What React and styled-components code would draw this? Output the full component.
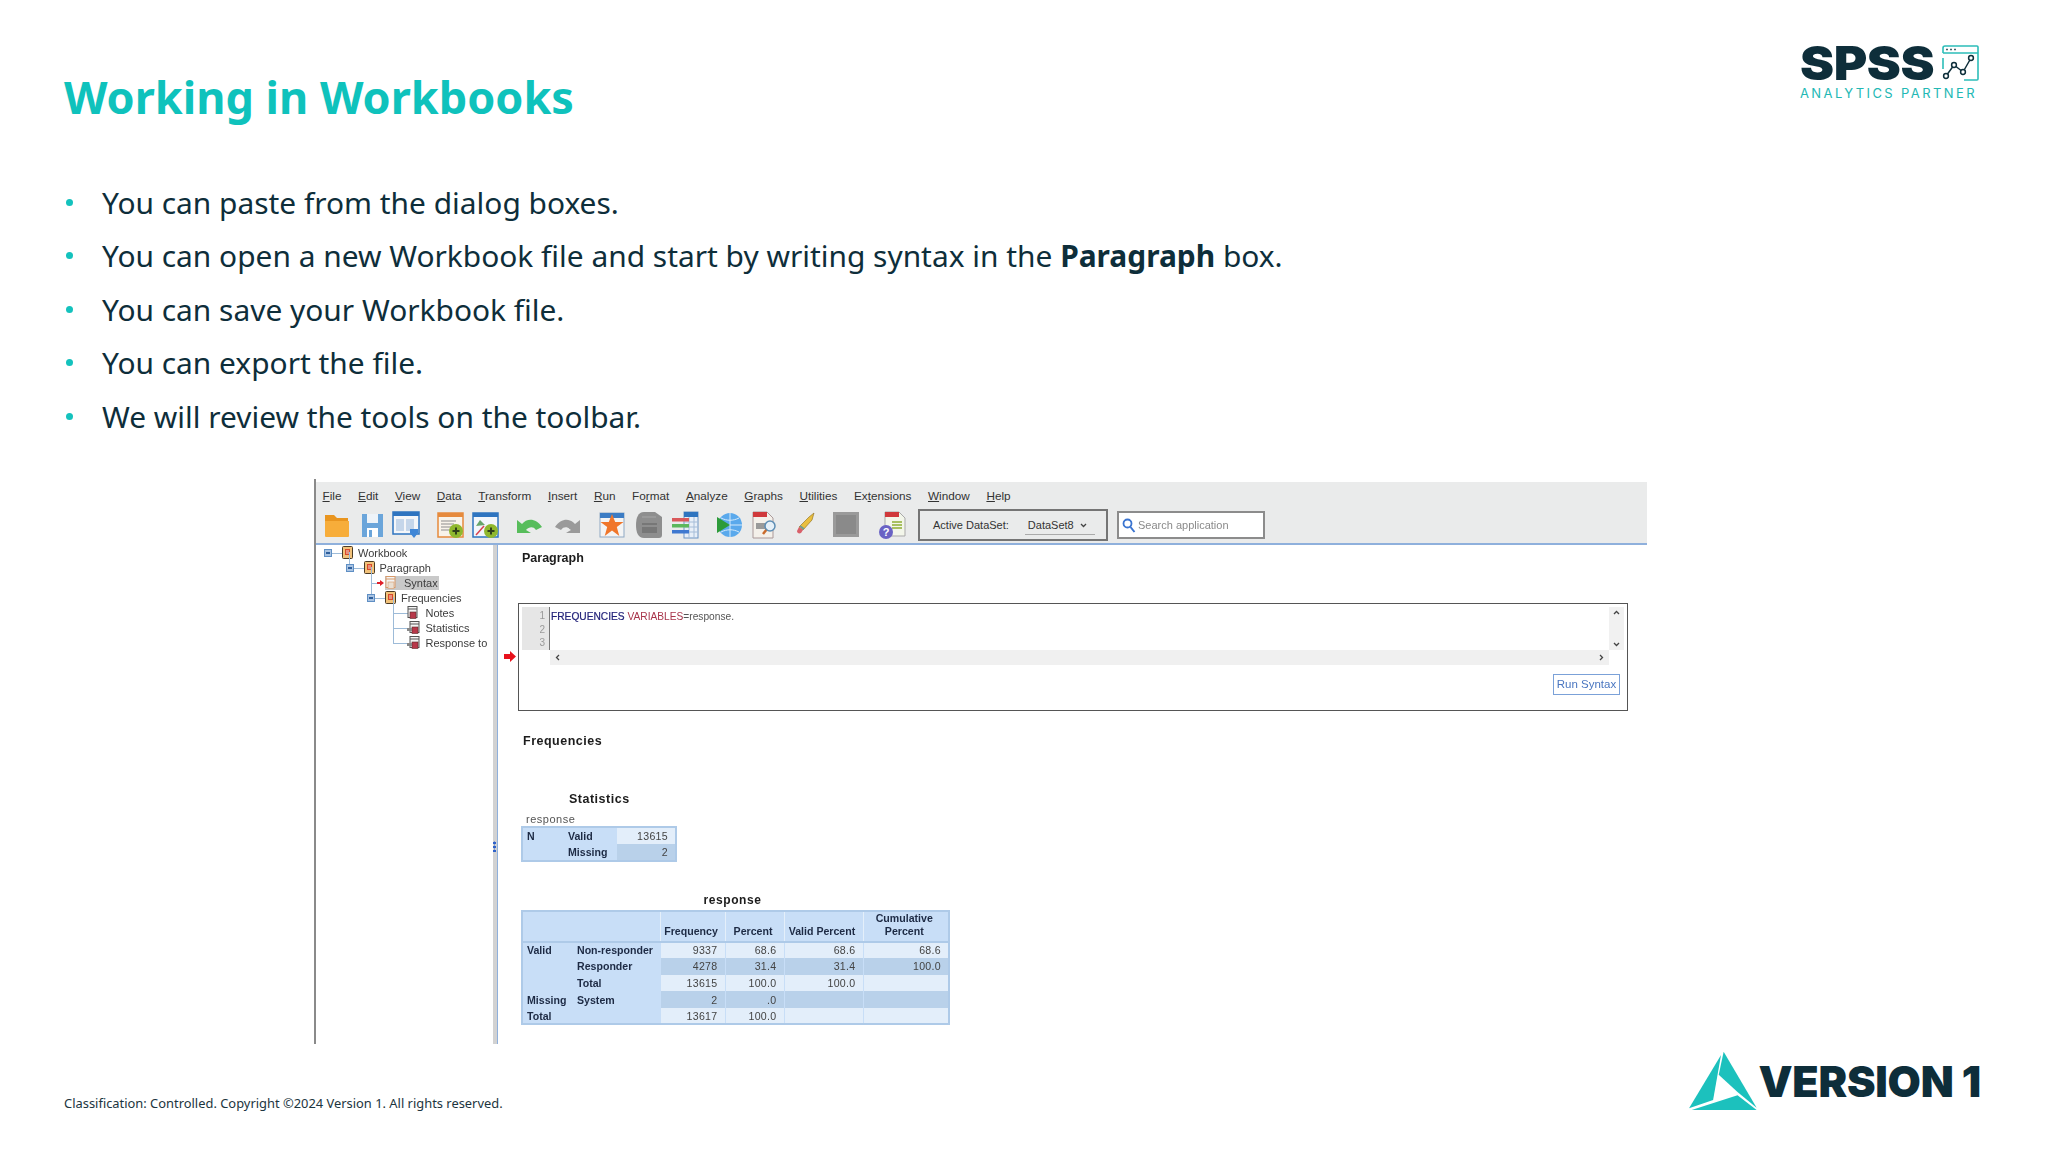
import React from 'react'
import styled, { createGlobalStyle } from 'styled-components'

const GlobalStyles = createGlobalStyle`
  html, body {
    margin: 0;
    padding: 0;
    background: #fff;
  }
  * { box-sizing: border-box; }
`

const Slide = styled.main`
  width: 2048px;
  height: 1152px;
  padding: 0 66px 0 64px;
  display: flex;
  flex-direction: column;
  overflow: hidden;
  font-family: "Noto Sans", sans-serif;
  color: #0e2e3a;
`

const Header = styled.header`
  height: 175.5px;
  display: flex;
  justify-content: space-between;
  align-items: flex-start;
`

const Title = styled.h1`
  margin: 67px 0 0;
  font-size: 45px;
  line-height: 60px;
  font-weight: 700;
  color: #0fc2bc;
`

const Brand = styled.div`
  margin: 45px 3px 0 0;
  width: 179px;
`

const BrandTop = styled.div`
  display: flex;
  justify-content: space-between;
  align-items: flex-start;
`

const BrandName = styled.span`
  font-family: Inter, sans-serif;
  font-weight: 900;
  font-size: 47px;
  line-height: 36px;
  letter-spacing: -0.4px;
  color: #0e2e3a;
  transform: scaleX(1.09);
  transform-origin: left center;
`

const BrandSub = styled.div`
  margin-top: 5px;
  font-family: Inter, sans-serif;
  font-size: 13px;
  line-height: 13px;
  letter-spacing: 2.4px;
  color: #22b8b4;
  white-space: nowrap;
`

const Bullets = styled.ul`
  list-style: none;
  margin: 0;
  padding: 0;
`

const Bullet = styled.li`
  position: relative;
  padding-left: 38px;
  font-size: 29.9px;
  line-height: 53.5px;
  color: #0e2e3a;

  &::before {
    content: '';
    position: absolute;
    left: 2px;
    top: 23px;
    width: 7px;
    height: 7px;
    border-radius: 50%;
    background: #14c2bd;
  }

  b { font-weight: 700; }
`

/* the pasted application screenshot */
const Shot = styled.section`
  margin: 36px 0 0 250px;
  width: 1333px;
  height: 565px;
  flex: none;
  display: flex;
  flex-direction: column;
  font-family: "Liberation Sans", Arial, sans-serif;
  color: #333;
  border-left: 2px solid #8a8a8a;
  filter: blur(0.35px);
`

const TopBars = styled.div`
  margin-top: 3px;
  height: 63px;
  flex: none;
  background: #eaebeb;
  border-bottom: 2px solid #8fb0dc;
`

const MenuBar = styled.nav`
  display: flex;
  gap: 16.6px;
  padding: 6px 0 0 6.5px;
  height: 25.5px;
  font-size: 11.75px;
  line-height: 15px;
`

const ToolBar = styled.div`
  display: flex;
  align-items: center;
  height: 35.5px;
`

const ToolIcon = styled.svg`
  flex: none;
  margin-left: ${p => p.$left}px;
`

const DatasetBox = styled.div`
  margin-left: 12px;
  width: 190px;
  height: 32px;
  flex: none;
  border: 2px solid #757575;
  display: flex;
  align-items: center;
  padding-left: 13px;
  font-size: 11px;
`

const DatasetValue = styled.span`
  margin-left: 16px;
  width: 70px;
  display: flex;
  align-items: center;
  gap: 6px;
  padding: 4px 0 3px 3px;
  border-bottom: 1px solid #aaa;
  white-space: nowrap;
`

const SearchBox = styled.div`
  margin-left: 9px;
  width: 148px;
  height: 28px;
  flex: none;
  border: 2px solid #8c8c8c;
  background: #fff;
  display: flex;
  align-items: center;
  gap: 2px;
  padding-left: 3px;
  font-size: 11px;
  color: #8a8a8a;
`

const Workspace = styled.div`
  flex: 1;
  min-height: 0;
  display: grid;
  grid-template-columns: 181px 1fr;
`

const Tree = styled.div`
  border-right: 4px solid #d2d2d2;
  font-size: 11px;
  position: relative;
`

const TreeRow = styled.div`
  position: relative;
  height: 15px;
  display: flex;
  align-items: center;
  padding-left: ${p => 8 + p.$depth * 21.5}px;
  white-space: nowrap;
  color: #3c3c3c;
  ${p => p.$line && `
    &::before {
      content: '';
      position: absolute;
      left: ${p.$line}px;
      top: -8px;
      width: ${p.$stub || 0}px;
      height: 16px;
      border-left: 1px solid #9dbbd8;
      border-bottom: ${p.$stub ? '1px solid #9dbbd8' : 'none'};
    }
  `}
`

const Toggle = styled.span`
  position: relative;
  width: 8px;
  height: 8px;
  flex: none;
  background: #a9c3e2;
  border: 1px solid #5f8fc4;

  &::after {
    content: '';
    position: absolute;
    left: 1px;
    right: 1px;
    top: 2px;
    height: 2px;
    background: #2f5f9c;
  }

  &::before {
    content: '';
    position: absolute;
    left: 7px;
    top: 3px;
    width: 10px;
    height: 1px;
    background: #9dbbd8;
  }
`

const ToggleGap = styled.span`
  width: 8px;
  flex: none;
`

const TreeLabel = styled.span`
  position: relative;
  display: flex;
  align-items: center;
  height: 14px;
  margin-left: 10px;
  gap: 5px;
  padding-right: 1px;
  background: ${p => (p.$selected ? '#c9c9c9' : 'transparent')};
`

const TreeArrow = styled.svg`
  position: absolute;
  left: -8px;
  top: 4px;
`

const Report = styled.div`
  position: relative;
  border-left: 1px solid #8fb0dc;
  padding-left: 20px;
  display: flex;
  flex-direction: column;
  align-items: flex-start;
`

const Grip = styled.span`
  position: absolute;
  left: -5px;
  top: 296px;
  width: 3px;
  height: 11px;
  background: radial-gradient(circle at center, #2f62c9 1.4px, transparent 1.6px) 0 0 / 3px 4px;
`

const Heading = styled.h2`
  margin: ${p => p.$top}px 0 0 ${p => p.$left}px;
  font-size: 12.5px;
  line-height: 16px;
  font-weight: 700;
  letter-spacing: ${p => p.$spacing || 0}px;
  color: #1c1c1c;
`

const SyntaxBox = styled.div`
  position: relative;
  margin-top: 37px;
  width: 1110px;
  height: 108px;
  flex: none;
  border: 1.5px solid #555;
  padding: 3px 2px 0 3px;
`

const RedArrow = styled.svg`
  position: absolute;
  left: -15px;
  top: 47px;
`

const Editor = styled.div`
  display: flex;
  height: 43px;
`

const Gutter = styled.div`
  width: 28px;
  flex: none;
  background: #e6e6e6;
  border-right: 1px solid #777;
  padding: 2px 4px 0 0;
  text-align: right;
  font-size: 10px;
  line-height: 13.5px;
  color: #9a9a9a;
`

const Code = styled.div`
  flex: 1;
  padding: 3px 0 0 1px;
  font-size: 10.2px;
  line-height: 13px;
  color: #555;

  b { font-weight: 400; color: #23237a; -webkit-text-stroke: 0.2px #23237a; }
  i { font-style: normal; color: #a8344a; }
`

const VScroll = styled.div`
  width: 15px;
  flex: none;
  margin-right: 1px;
  padding: 3px 0;
  background: #f1f1f1;
  display: flex;
  flex-direction: column;
  justify-content: space-between;
  align-items: center;
`

const HScroll = styled.div`
  margin-left: 28px;
  margin-right: 16px;
  height: 15px;
  background: #f0f0f0;
  display: flex;
  justify-content: space-between;
  align-items: center;
  padding: 0 4px 0 4px;
`

const ChevronMark = styled.svg`
  display: block;
  flex: none;
  transform: rotate(${p => p.$turn}deg);
`

const BoxFooter = styled.div`
  display: flex;
  justify-content: flex-end;
  padding: 8.5px 5px 0 0;
`

const RunButton = styled.button`
  width: 67px;
  height: 21px;
  padding: 0;
  background: #fff;
  border: 1.5px solid #7ba1d8;
  font-family: inherit;
  font-size: 11.5px;
  color: #4a76c0;
`

const Caption = styled.div`
  margin: 5px 0 0.5px 8px;
  font-size: 11px;
  line-height: 14px;
  letter-spacing: 0.5px;
  color: #555;
`

const TableTitle = styled.div`
  margin-top: 29.5px;
  width: 427px;
  padding-left: 2px;
  text-align: center;
  font-size: 12px;
  line-height: 16px;
  font-weight: 700;
  letter-spacing: 0.6px;
  color: #1c1c1c;
`

const PivotTable = styled.table`
  margin: ${p => p.$top || 0}px 0 0 3px;
  width: ${p => p.$width}px;
  table-layout: fixed;
  border-collapse: collapse;
  border: 2px solid #aecae8;
  background: #c8def7;
  font-size: 10.6px;
`

const HeadCell = styled.th`
  padding: 0 4px 3px 1px;
  height: 31px;
  vertical-align: bottom;
  text-align: center;
  font-weight: 700;
  line-height: 13px;
  color: #1d2a44;
  border-left: 1px solid ${p => (p.$plain ? 'transparent' : '#e4effa')};
  border-bottom: 2px solid #aecae8;
`

const LabelCell = styled.th`
  height: ${p => p.$tall ? 17 : 16.6}px;
  padding: 0 0 0 4px;
  text-align: left;
  font-weight: 700;
  white-space: nowrap;
  color: #1d2a44;
`

const ValueCell = styled.td`
  height: 16.6px;
  padding: 0 7px 0 0;
  text-align: right;
  letter-spacing: 0.3px;
  color: #444;
  background: ${p => (p.$odd ? '#b9d1ea' : '#e3eefa')};
  border-left: 1px solid #c8def7;
`

const Footer = styled.footer`
  margin-top: 7px;
  display: flex;
  justify-content: space-between;
  align-items: flex-end;
`

const Legal = styled.small`
  font-size: 12.9px;
  line-height: 16px;
  color: #1c3540;
`

const FooterBrand = styled.div`
  display: flex;
  align-items: center;
  gap: 0;
  margin-right: 1px;
`

const FooterName = styled.span`
  font-family: Inter, sans-serif;
  font-weight: 900;
  font-size: 43px;
  line-height: 60px;
  letter-spacing: -0.25px;
  white-space: nowrap;
  color: #0e2e3a;
`

const menu = [
  ['F', 'ile'], ['E', 'dit'], ['V', 'iew'], ['D', 'ata'], ['T', 'ransform'], ['I', 'nsert'], ['R', 'un'],
  ['F', 'ormat', 1], ['A', 'nalyze'], ['G', 'raphs'], ['U', 'tilities'], ['E', 'xtensions', 1], ['W', 'indow'], ['H', 'elp'],
]

const Icon = ({ w = 28, left = 0, children }) => (
  <ToolIcon $left={left} width={w} height="28" viewBox={`0 0 ${w} 28`}>{children}</ToolIcon>
)

// points down at 0deg
const Chevron = ({ turn = 0 }) => (
  <ChevronMark $turn={turn} width="7" height="5" viewBox="0 0 7 5">
    <path d="M1 1l2.500 2.500L6 1" fill="none" stroke="#444" strokeWidth="1.300" />
  </ChevronMark>
)

const PlusBadge = () => (
  <>
    <circle cx="19" cy="20" r="7" fill="#8fb82e" />
    <path d="M19 16.500v7M15.500 20h7" stroke="#30401a" strokeWidth="2" />
  </>
)

const BookIcon = () => (
  <svg width="11" height="13" viewBox="0 0 11 13">
    <rect x=".5" y=".5" width="10" height="12" rx="1" fill="#f2c27a" stroke="#4a3a24" />
    <rect x="3" y="3" width="5" height="6" fill="#d8492a" />
    <path d="M4 5h3M4 7h3" stroke="#fff" strokeWidth=".8" />
  </svg>
)

const SheetIcon = ({ locked, pale }) => (
  <svg width="14" height="13" viewBox="0 0 14 13">
    <rect x={locked ? 3 : 1} y=".5" width="9" height="11" fill="#f4f4f4" stroke={pale ? '#d79a6a' : '#555'} />
    <path d={locked ? 'M3 3h9' : 'M1 3h9'} stroke={pale ? '#d79a6a' : '#555'} />
    <rect x={locked ? 5 : 3} y="6" width="6" height="6.500" fill={pale ? '#eadfd2' : '#b8384a'} stroke={pale ? '#d79a6a' : '#5a2a2a'} strokeWidth=".6" />
    {locked && <rect x="0" y="7" width="5" height="3" fill="#888" />}
  </svg>
)

const App = () => {
  return (
    <Slide>
      <GlobalStyles />
      <Header>
        <Title>Working in Workbooks</Title>
        <Brand>
          <BrandTop>
            <BrandName>SPSS</BrandName>
            <svg width="37" height="37" viewBox="0 0 37 37">
              <path d="M1 8V3a2 2 0 0 1 2-2h32a1 1 0 0 1 1 1v32a1 1 0 0 1-1 1H22" fill="none" stroke="#2dbdb9" strokeWidth="1.600" />
              <path d="M1 13v11M1 8h35" fill="none" stroke="#2dbdb9" strokeWidth="1.600" />
              <path d="M4 4.500h2M8 4.500h2M12 4.500h2" stroke="#44606a" strokeWidth="1.600" />
              <path d="M4 31l8-11 9 7 8-14" fill="none" stroke="#0e2e3a" strokeWidth="1.500" />
              <g fill="#fff" stroke="#0e2e3a" strokeWidth="1.500">
                <circle cx="4" cy="31" r="2.400" />
                <circle cx="12" cy="20" r="2.400" />
                <circle cx="21" cy="27" r="2.400" />
                <circle cx="29" cy="13" r="2.400" />
              </g>
            </svg>
          </BrandTop>
          <BrandSub>ANALYTICS PARTNER</BrandSub>
        </Brand>
      </Header>

      <Bullets>
        <Bullet>You can paste from the dialog boxes.</Bullet>
        <Bullet>You can open a new Workbook file and start by writing syntax in the <b>Paragraph</b> box.</Bullet>
        <Bullet>You can save your Workbook file.</Bullet>
        <Bullet>You can export the file.</Bullet>
        <Bullet>We will review the tools on the toolbar.</Bullet>
      </Bullets>

      <Shot>
        <TopBars>
          <MenuBar>
            {menu.map(([a, b, second]) => (
              <span key={a + b}>
                {second ? <>{a}{b[0]}<u>{b[1]}</u>{b.slice(2)}</> : <><u>{a}</u>{b}</>}
              </span>
            ))}
          </MenuBar>
          <ToolBar>
            <Icon left={8} w={26}>
              <path d="M1 4h9l3 3h11v4H1z" fill="#e9951f" />
              <path d="M1 10h24v15a1 1 0 0 1-1 1H2a1 1 0 0 1-1-1z" fill="#f7ad3a" />
            </Icon>
            <Icon left={11} w={23}>
              <path d="M1 3h21v23H1z" fill="#6ba5da" />
              <rect x="6" y="3" width="11" height="9" fill="#eef3f8" />
              <rect x="6" y="17" width="11" height="9" fill="#fff" />
              <rect x="8" y="19" width="3" height="7" fill="#6ba5da" />
            </Icon>
            <Icon left={8} w={28}>
              <rect x="1" y="1" width="26" height="22" fill="#f4f6f9" stroke="#2e74c0" strokeWidth="1.500" />
              <rect x="1" y="1" width="26" height="4" fill="#2e74c0" />
              <rect x="4" y="8" width="8" height="12" fill="#c5d6ea" />
              <rect x="14" y="8" width="8" height="12" fill="#c5d6ea" />
              <path d="M18 18h8v4l-4 5-4-5z" fill="#3f86d6" />
            </Icon>
            <Icon left={17} w={27}>
              <rect x="1" y="2" width="25" height="24" fill="#f8f3ea" stroke="#e68a3c" strokeWidth="1.500" />
              <rect x="1" y="2" width="25" height="4" fill="#e68a3c" />
              <path d="M4 10h15M4 13h13M4 16h10M4 19h9" stroke="#8d8d8d" />
              <PlusBadge />
            </Icon>
            <Icon left={8} w={27}>
              <rect x="1" y="2" width="25" height="24" fill="#f2f6fb" stroke="#2e74c0" strokeWidth="1.500" />
              <rect x="1" y="2" width="25" height="4" fill="#2e74c0" />
              <path d="M4 15l4-6 5 5" fill="#67a56a" />
              <path d="M4 24l8-9" stroke="#d9414f" strokeWidth="1.500" />
              <PlusBadge />
            </Icon>
            <Icon left={17} w={27}>
              <path d="M1 22V9l5 4c5-6 14-6 20 3l-6 3c-3-4-7-3-10 0l5 3z" fill="#57bd5b" />
            </Icon>
            <Icon left={10} w={28}>
              <path d="M27 22V9l-5 4c-5-6-14-6-20 3l6 3c3-4 7-3 10 0l-5 3z" fill="#9a9a9a" />
            </Icon>
            <Icon left={18} w={26}>
              <rect x="1" y="2" width="24" height="24" fill="#f4f4f4" stroke="#8fa9c4" />
              <rect x="1" y="2" width="24" height="5" fill="#3b7cc4" />
              <path d="M13 3l3.200 8h8.300l-6.700 5 2.500 9-7.300-5.400-7.300 5.400 2.500-9-6.700-5h8.300z" fill="#f0762b" />
            </Icon>
            <Icon left={10} w={28}>
              <path d="M9 1h11l7 5v18c0 2-1 3-3 3H9C3 27 1 21 1 14S3 1 9 1z" fill="#8e8e8e" />
              <rect x="7" y="12" width="15" height="10" fill="#777" />
              <path d="M7 15h15M7 6h14" stroke="#a6a6a6" />
            </Icon>
            <Icon left={8} w={28}>
              <rect x="13" y="1" width="14" height="26" fill="#e8eff8" stroke="#6d94c4" />
              <rect x="13" y="1" width="14" height="5" fill="#2e74c0" />
              <path d="M18 6v21M23 6v21M13 11h14M13 16h14M13 21h14" stroke="#a6bdd8" />
              <rect x="1" y="7" width="17" height="3.500" fill="#d9585a" />
              <rect x="1" y="13" width="17" height="3.500" fill="#5cb85c" />
              <rect x="1" y="19" width="17" height="3.500" fill="#3f78d0" />
            </Icon>
            <Icon left={17} w={26}>
              <circle cx="14" cy="14" r="12" fill="#5aa9ec" />
              <path d="M14 2v24M2 14h24M5 7c6 3 12 3 18 0M5 21c6-3 12-3 18 0" stroke="#d3e9fb" fill="none" />
              <path d="M1 6l13 8-13 8z" fill="#2d9b3a" />
            </Icon>
            <Icon left={9} w={26}>
              <path d="M2 1h14l6 6v20H2z" fill="#f4f0ea" stroke="#a99" />
              <rect x="2" y="1" width="14" height="5" fill="#d0393b" />
              <rect x="5" y="12" width="10" height="6" fill="#9a9a9a" />
              <path d="M12 23l4-5" stroke="#c96a2b" strokeWidth="2.500" />
              <circle cx="19" cy="15" r="5" fill="#e6f0f8" stroke="#5d8eb5" strokeWidth="1.500" />
            </Icon>
            <Icon left={19} w={19}>
              <path d="M13 6l5-4-2 7-9 10-4-3z" fill="#e9bf3f" stroke="#8b6a16" strokeWidth=".6" />
              <path d="M3 16l4 3-2 3c-2 1-4 0-4-2z" fill="#d9606a" />
              <path d="M4 15l4 3" stroke="#6d9a9a" strokeWidth="1.600" />
            </Icon>
            <Icon left={18} w={26}>
              <rect x="0" y="1" width="26" height="25" fill="#9a9a9a" />
              <rect x="3" y="4" width="20" height="19" fill="#8a8a8a" />
            </Icon>
            <Icon left={19} w={28}>
              <path d="M7 1h14l6 6v18H7z" fill="#f3f6ea" stroke="#a9a9a9" />
              <rect x="7" y="1" width="14" height="5" fill="#d0393b" />
              <path d="M14 11h10M14 14h10M14 17h10" stroke="#a7c060" strokeWidth="2" />
              <circle cx="8" cy="21" r="7" fill="#6a63c4" />
              <text x="8" y="25" fontSize="11" fontWeight="700" fill="#fff" textAnchor="middle" fontFamily="Liberation Sans">?</text>
            </Icon>
            <DatasetBox>
              Active DataSet:
              <DatasetValue>DataSet8<Chevron /></DatasetValue>
            </DatasetBox>
            <SearchBox>
              <svg width="14" height="15" viewBox="0 0 14 15">
                <circle cx="5.500" cy="5.500" r="4" fill="none" stroke="#3a74d0" strokeWidth="1.800" />
                <path d="M8.500 9l4 5" stroke="#3a74d0" strokeWidth="2" />
              </svg>
              Search application
            </SearchBox>
          </ToolBar>
        </TopBars>

        <Workspace>
          <Tree>
            <TreeRow $depth={0}><Toggle /><TreeLabel><BookIcon />Workbook</TreeLabel></TreeRow>
            <TreeRow $depth={1} $line={33}><Toggle /><TreeLabel><BookIcon />Paragraph</TreeLabel></TreeRow>
            <TreeRow $depth={2} $line={55} $stub={7}>
              <ToggleGap />
              <TreeLabel $selected>
                <TreeArrow width="7" height="6" viewBox="0 0 7 6"><path d="M0 2h3V0l4 3-4 3V4H0z" fill="#e0202a" /></TreeArrow>
                <SheetIcon pale />Syntax
              </TreeLabel>
            </TreeRow>
            <TreeRow $depth={2} $line={55}><Toggle /><TreeLabel><BookIcon />Frequencies</TreeLabel></TreeRow>
            <TreeRow $depth={3} $line={77} $stub={14}><ToggleGap /><TreeLabel><SheetIcon />Notes</TreeLabel></TreeRow>
            <TreeRow $depth={3} $line={77} $stub={14}><ToggleGap /><TreeLabel><SheetIcon locked />Statistics</TreeLabel></TreeRow>
            <TreeRow $depth={3} $line={77} $stub={14}><ToggleGap /><TreeLabel><SheetIcon locked />Response to</TreeLabel></TreeRow>
          </Tree>

          <Report>
            <Grip />
            <Heading $top={5} $left={4}>Paragraph</Heading>
            <SyntaxBox>
              <RedArrow width="12" height="11" viewBox="0 0 12 11"><path d="M0 3h6V0l6 5.500-6 5.500V8H0z" fill="#e8121c" /></RedArrow>
              <Editor>
                <Gutter>1<br />2<br />3</Gutter>
                <Code><b>FREQUENCIES</b> <i>VARIABLES</i>=response.</Code>
                <VScroll><Chevron turn={180} /><Chevron /></VScroll>
              </Editor>
              <HScroll><Chevron turn={90} /><Chevron turn={-90} /></HScroll>
              <BoxFooter><RunButton>Run Syntax</RunButton></BoxFooter>
            </SyntaxBox>

            <Heading $top={21.5} $left={5} $spacing={0.5}>Frequencies</Heading>
            <Heading $top={42} $left={51} $spacing={0.5}>Statistics</Heading>
            <Caption>response</Caption>
            <PivotTable $width={154}>
              <colgroup><col width="42" /><col width="52" /><col width="60" /></colgroup>
              <tbody>
                <tr><LabelCell $tall>N</LabelCell><LabelCell $tall>Valid</LabelCell><ValueCell>13615</ValueCell></tr>
                <tr><LabelCell $tall /><LabelCell $tall>Missing</LabelCell><ValueCell $odd>2</ValueCell></tr>
              </tbody>
            </PivotTable>

            <TableTitle>response</TableTitle>
            <PivotTable $width={427} $top={2}>
              <colgroup>
                <col width="51" /><col width="87" /><col width="65" /><col width="59" /><col width="79" /><col width="86" />
              </colgroup>
              <thead>
                <tr>
                  <HeadCell $plain colSpan={2} />
                  <HeadCell>Frequency</HeadCell>
                  <HeadCell>Percent</HeadCell>
                  <HeadCell>Valid&nbsp;Percent</HeadCell>
                  <HeadCell>Cumulative Percent</HeadCell>
                </tr>
              </thead>
              <tbody>
                <tr><LabelCell>Valid</LabelCell><LabelCell>Non-responder</LabelCell><ValueCell>9337</ValueCell><ValueCell>68.6</ValueCell><ValueCell>68.6</ValueCell><ValueCell>68.6</ValueCell></tr>
                <tr><LabelCell /><LabelCell>Responder</LabelCell><ValueCell $odd>4278</ValueCell><ValueCell $odd>31.4</ValueCell><ValueCell $odd>31.4</ValueCell><ValueCell $odd>100.0</ValueCell></tr>
                <tr><LabelCell /><LabelCell>Total</LabelCell><ValueCell>13615</ValueCell><ValueCell>100.0</ValueCell><ValueCell>100.0</ValueCell><ValueCell /></tr>
                <tr><LabelCell>Missing</LabelCell><LabelCell>System</LabelCell><ValueCell $odd>2</ValueCell><ValueCell $odd>.0</ValueCell><ValueCell $odd /><ValueCell $odd /></tr>
                <tr><LabelCell>Total</LabelCell><LabelCell /><ValueCell>13617</ValueCell><ValueCell>100.0</ValueCell><ValueCell /><ValueCell /></tr>
              </tbody>
            </PivotTable>
          </Report>
        </Workspace>
      </Shot>

      <Footer>
        <Legal>Classification: Controlled. Copyright ©2024 Version 1. All rights reserved.</Legal>
        <FooterBrand>
          <svg width="70" height="60" viewBox="58 33 210 182">
            <path d="M157 45L60 207l73-25z" fill="#1cc1bd" />
            <path d="M165 35l100 170-58-48-57-52z" fill="#1cc1bd" />
            <path d="M68 212l139-45 58 45z" fill="#1cc1bd" />
          </svg>
          <FooterName>VERSION 1</FooterName>
        </FooterBrand>
      </Footer>
    </Slide>
  )
}

export default App
